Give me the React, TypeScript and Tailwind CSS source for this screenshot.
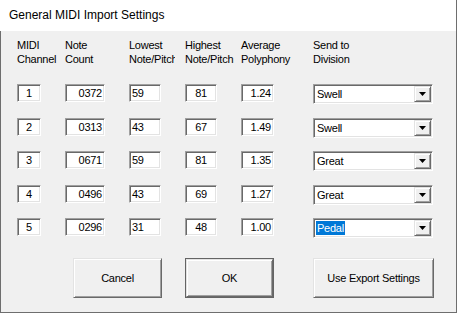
import React from 'react'

type Row = {
  channel: string
  count: string
  lowest: string
  highest: string
  poly: string
  division: string
  selected?: boolean
}

const rows: Row[] = [
  { channel: '1', count: '0372', lowest: '59', highest: '81', poly: '1.24', division: 'Swell' },
  { channel: '2', count: '0313', lowest: '43', highest: '67', poly: '1.49', division: 'Swell' },
  { channel: '3', count: '0671', lowest: '59', highest: '81', poly: '1.35', division: 'Great' },
  { channel: '4', count: '0496', lowest: '43', highest: '69', poly: '1.27', division: 'Great' },
  { channel: '5', count: '0296', lowest: '31', highest: '48', poly: '1.00', division: 'Pedal', selected: true },
]

// sunken 3d edit box, like the old win32 controls
const sunken =
  'border border-t-[#a0a0a0] border-l-[#a0a0a0] border-b-white border-r-white bg-white shadow-[inset_1px_1px_0_#696969,inset_-1px_-1px_0_#e3e3e3]'

const raised =
  'border border-t-[#e3e3e3] border-l-[#e3e3e3] border-b-[#696969] border-r-[#696969] bg-[#f0f0f0] shadow-[inset_1px_1px_0_#ffffff,inset_-1px_-1px_0_#a0a0a0]'

function Field({ value, width, align }: { value: string; width: string; align: string }) {
  return (
    <div className={`${sunken} ${width} ${align} h-[18px] leading-[16px] text-black overflow-hidden whitespace-nowrap`}>
      {value}
    </div>
  )
}

function Combo({ value, selected }: { value: string; selected?: boolean }) {
  return (
    <div className={`${sunken} w-[120px] h-[20px] flex items-stretch`}>
      <div className="flex-1 flex items-center pl-[2px]">
        <span className={`leading-[14px] px-[1px] ${selected ? 'bg-[#0078d7] text-white' : 'text-black'}`}>{value}</span>
      </div>
      <div className={`${raised} w-[17px] my-[1px] mr-[1px] flex items-center justify-center`}>
        <svg width="7" height="4" viewBox="0 0 7 4">
          <path d="M0 0h7L3.5 4z" fill="#000" />
        </svg>
      </div>
    </div>
  )
}

function Header({ top, bottom, clip }: { top: string; bottom: string; clip?: boolean }) {
  return (
    <div className={`leading-[13.5px] whitespace-nowrap ${clip ? 'w-[46px] overflow-hidden' : ''}`}>
      <div>{top}</div>
      <div>{bottom}</div>
    </div>
  )
}

export default function App() {
  const cols = 'grid grid-cols-[48px_64px_56px_56px_72px_1fr] items-start'

  return (
    <div
      className="w-[457px] h-[313px] bg-[#f0f0f0] flex flex-col border-r border-[#6e6e6e] text-[11px] tracking-[-0.25px] text-black"
      style={{ fontFamily: '"Liberation Sans", Arial, sans-serif' }}
    >
      <div className="h-[31px] bg-white pl-[9px] leading-[31px] text-[12px] tracking-normal text-[#000]">
        General MIDI Import Settings
      </div>

      <div className="flex-1 border-l border-b border-[#6e6e6e] pl-[16px] pt-[8px]">
        <div className={cols}>
          <Header top="MIDI" bottom="Channel" />
          <Header top="Note" bottom="Count" />
          <Header top="Lowest" bottom="Note/Pitch" clip />
          <Header top="Highest" bottom="Note/Pitch" />
          <Header top="Average" bottom="Polyphony" />
          <Header top="Send to" bottom="Division" />
        </div>

        <div className="mt-[18px] flex flex-col gap-[13.5px]">
          {rows.map((r) => (
            <div key={r.channel} className={`${cols} h-[20px]`}>
              <Field value={r.channel} width="w-[24px]" align="text-center" />
              <Field value={r.count} width="w-[40px]" align="text-right pr-[2px]" />
              <Field value={r.lowest} width="w-[32px]" align="text-left pl-[2px]" />
              <Field value={r.highest} width="w-[32px]" align="text-center" />
              <Field value={r.poly} width="w-[33px]" align="text-right pr-[2px]" />
              <Combo value={r.division} selected={r.selected} />
            </div>
          ))}
        </div>

        <div className="mt-[20px] flex items-start">
          <button className={`${raised} ml-[56px] w-[89px] h-[40px] text-[11px]`}>Cancel</button>
          <button className="ml-[23px] w-[89px] h-[40px] border border-[#646464] p-0">
            <div className={`${raised} w-full h-full flex items-center justify-center`}>OK</div>
          </button>
          <button className={`${raised} ml-[39px] w-[121px] h-[40px]`}>Use Export Settings</button>
        </div>
      </div>
    </div>
  )
}
